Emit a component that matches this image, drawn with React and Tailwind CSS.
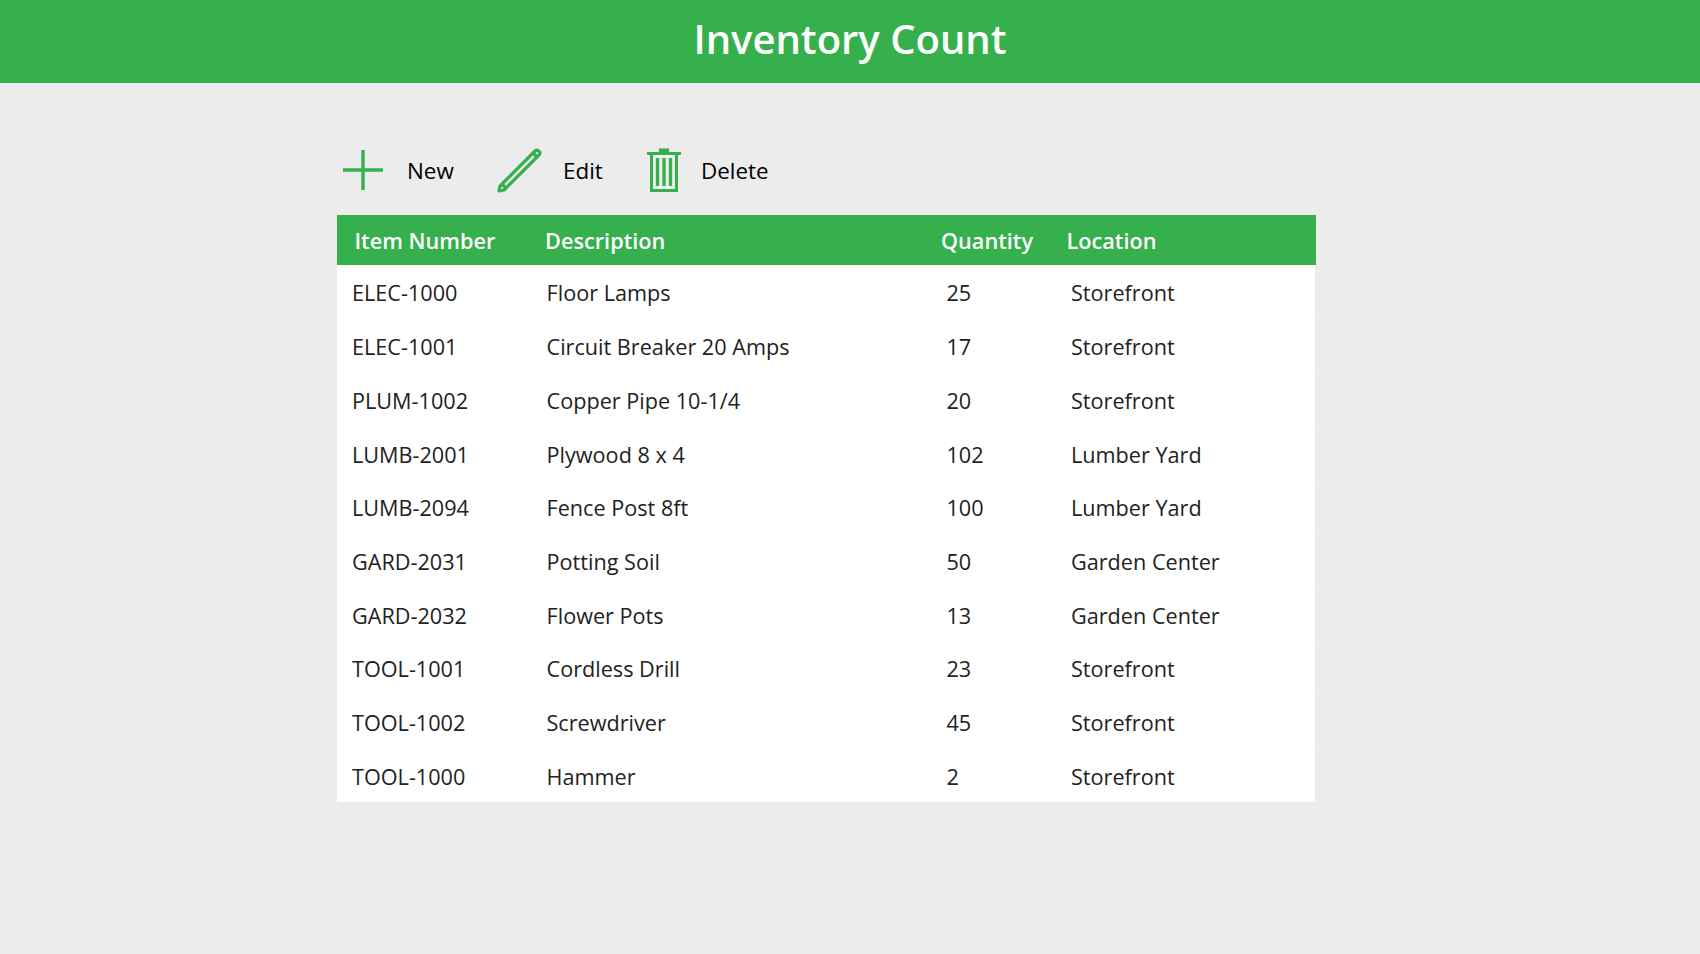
const items = [
  ['ELEC-1000', 'Floor Lamps', '25', 'Storefront'],
  ['ELEC-1001', 'Circuit Breaker 20 Amps', '17', 'Storefront'],
  ['PLUM-1002', 'Copper Pipe 10-1/4', '20', 'Storefront'],
  ['LUMB-2001', 'Plywood 8 x 4', '102', 'Lumber Yard'],
  ['LUMB-2094', 'Fence Post 8ft', '100', 'Lumber Yard'],
  ['GARD-2031', 'Potting Soil', '50', 'Garden Center'],
  ['GARD-2032', 'Flower Pots', '13', 'Garden Center'],
  ['TOOL-1001', 'Cordless Drill', '23', 'Storefront'],
  ['TOOL-1002', 'Screwdriver', '45', 'Storefront'],
  ['TOOL-1000', 'Hammer', '2', 'Storefront'],
];

function PlusIcon() {
  return (
    <svg width="42" height="42" viewBox="0 0 42 42" fill="none" stroke="#36b04d" strokeWidth="3.4">
      <path d="M21 1v40M1 21h40" />
    </svg>
  );
}

function PencilIcon() {
  return (
    <svg width="48" height="48" viewBox="0 0 48 48" fill="none" stroke="#36b04d" strokeWidth="3.2" strokeLinejoin="round">
      <path d="M3 40 38 5A2.83 2.83 0 0 1 42 9L7 44l-5 1z" />
      <path d="M36 7l4 4M5 38l4 4" />
    </svg>
  );
}

function TrashIcon() {
  return (
    <svg width="34" height="44" viewBox="0 0 34 44" fill="none" stroke="#36b04d" strokeWidth="3">
      <path d="M0 5.5h34" />
      <path d="M12 2.5h10" strokeWidth="4" />
      <path d="M4.5 7v35.5h25V7" />
      <path d="M10.5 10v28M17 10v28M23.5 10v28" strokeWidth="3.3" />
    </svg>
  );
}

export default function App() {
  return (
    <div className="min-h-[954px] bg-[#ececec] font-['Open_Sans',sans-serif]">
      <header className="flex h-[83px] items-start justify-center bg-[#36b04d] pt-[12px]">
        <h1 className="text-[40px] leading-[54px] font-semibold text-white">Inventory Count</h1>
      </header>

      <main className="pl-[337px] pt-[53px]">
        {/* Toolbar */}
        <div className="mb-[11px] flex h-[68px] items-center text-[22.4px] text-black">
          <div className="ml-[5px] flex items-center gap-[23px]">
            <PlusIcon />
            <span className="w-[47px] pt-[2px]">New</span>
          </div>
          <div className="ml-[43px] flex items-center gap-[18px]">
            <PencilIcon />
            <span className="w-[40px] pt-[2px]">Edit</span>
          </div>
          <div className="ml-[44px] flex items-center gap-[20px]">
            <TrashIcon />
            <span className="pt-[2px]">Delete</span>
          </div>
        </div>

        {/* Inventory table */}
        <div className="w-[979px]">
          <div className="flex h-[50px] items-center bg-[#36b04d] pt-[2px] text-[21.7px] font-semibold text-white">
            <span className="w-[194px] pl-[17.5px]">Item Number</span>
            <span className="w-[396px] pl-[14px]">Description</span>
            <span className="w-[126px] pl-[14px]">Quantity</span>
            <span className="pl-[13.5px]">Location</span>
          </div>
          <div className="w-[978px] bg-white text-[21.65px] text-[#222222]">
            {items.map((row, i) => (
              <div key={row[0]} className={`flex h-[53.7px] items-center ${i > 0 ? 'border-t border-[#fcfcfc]' : ''}`}>
                <span className="flex h-full w-[195px] items-center border-r border-[#fcfcfc] pl-[15px] pt-[3px]">{row[0]}</span>
                <span className="flex h-full w-[400px] items-center pl-[14.5px] pt-[3px]">{row[1]}</span>
                <span className="flex h-full w-[125px] items-center border-l border-[#fcfcfc] pl-[13.5px] pt-[3px]">{row[2]}</span>
                <span className="pl-[14px] pt-[3px]">{row[3]}</span>
              </div>
            ))}
          </div>
        </div>
      </main>
    </div>
  );
}
